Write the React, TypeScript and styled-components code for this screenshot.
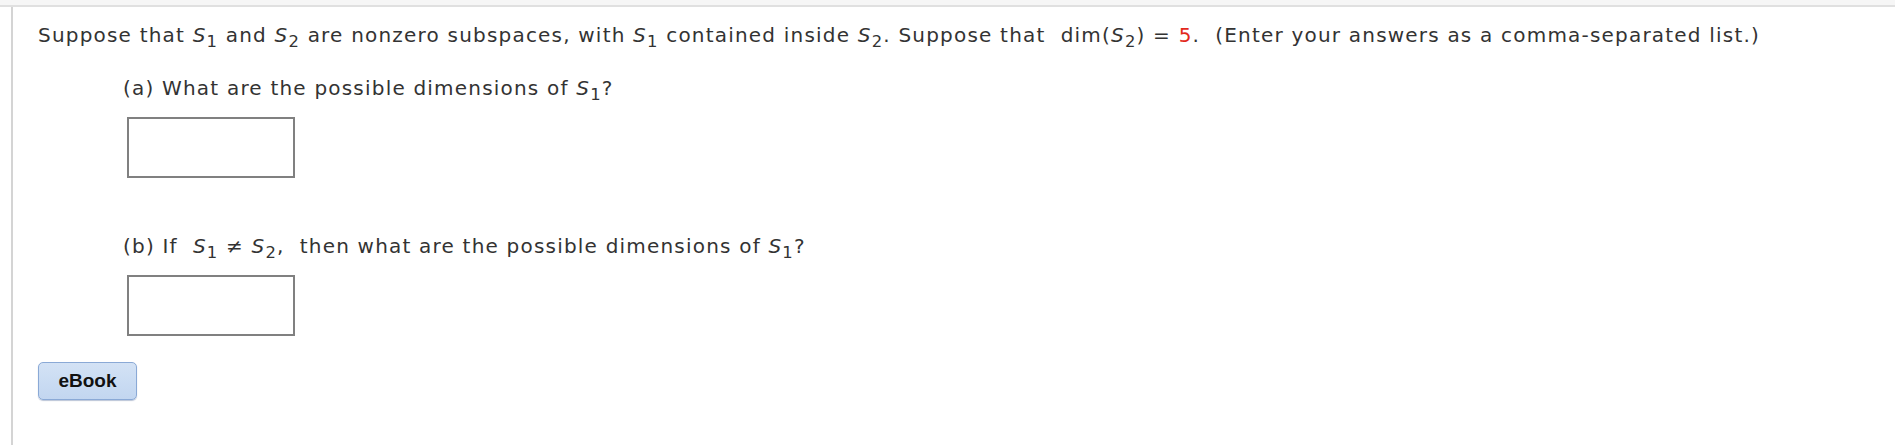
import React from 'react';
import styled, { createGlobalStyle } from 'styled-components';

const GlobalStyle = createGlobalStyle`
    html, body {
        margin: 0;
        padding: 0;
        background: #ffffff;
    }
    body {
        font-family: 'DejaVu Sans', Verdana, sans-serif;
        color: #333333;
    }
`;

const TopStrip = styled.div`
    height: 5px;
    background: #f6f6f6;
    border-bottom: 2px solid #e0e0e0;
`;

const Frame = styled.div`
    margin-left: 11px;
    border-left: 2px solid #d4d4d4;
    min-height: 438px;
    padding: 16px 0 0 25px;
    box-sizing: border-box;
`;

const Line = styled.div`
    font-size: 20px;
    letter-spacing: 1.2px;
    line-height: 24px;
    white-space: nowrap;
`;

const Questions = styled.div`
    padding-left: 85px;
`;

const Question = styled(Line)<{ $top: number }>`
    margin-top: ${(p) => p.$top}px;
`;

const Var = styled.i`
    font-style: italic;
`;

const Sub = styled.sub`
    font-size: 0.82em;
    line-height: 0;
    vertical-align: -0.32em;
`;

const Red = styled.span`
    color: #e2281b;
`;

const AnswerBox = styled.div<{ $top: number }>`
    width: 168px;
    height: 61px;
    margin: ${(p) => p.$top}px 0 0 4px;
    border: 2px solid #808080;
    box-sizing: border-box;
    background: #fff;
`;

const EBookButton = styled.button`
    margin-top: 26px;
    width: 99px;
    height: 38px;
    border: 1px solid #8aa9d6;
    border-radius: 5px;
    background: linear-gradient(#d3e2f5, #c2d6f0);
    box-shadow: 0 1px 1px rgba(60, 90, 140, 0.35);
    font-family: 'Liberation Sans', Arial, sans-serif;
    font-weight: bold;
    font-size: 19px;
    color: #111;
    padding: 0;
    cursor: pointer;
`;

const S = ({ n }: { n: number }) => (
    <>
        <Var>S</Var>
        <Sub>{n}</Sub>
    </>
);

const App = () => {
    return (
        <>
            <GlobalStyle />
            <TopStrip />
            <Frame>
                <Line>
                    Suppose that <S n={1} /> and <S n={2} /> are nonzero subspaces, with <S n={1} /> contained inside{' '}
                    <S n={2} />. Suppose that&nbsp; dim(<S n={2} />) = <Red>5</Red>.&nbsp; (Enter your answers as a
                    comma-separated list.)
                </Line>
                <Questions>
                    <Question $top={29}>
                        (a) What are the possible dimensions of <S n={1} />?
                    </Question>
                    <AnswerBox $top={17} />
                    <Question $top={56}>
                        (b) If&nbsp; <S n={1} /> ≠ <S n={2} />,&nbsp; then what are the possible dimensions of <S n={1} />?
                    </Question>
                    <AnswerBox $top={17} />
                </Questions>
                <EBookButton>eBook</EBookButton>
            </Frame>
        </>
    );
};

export default App;
